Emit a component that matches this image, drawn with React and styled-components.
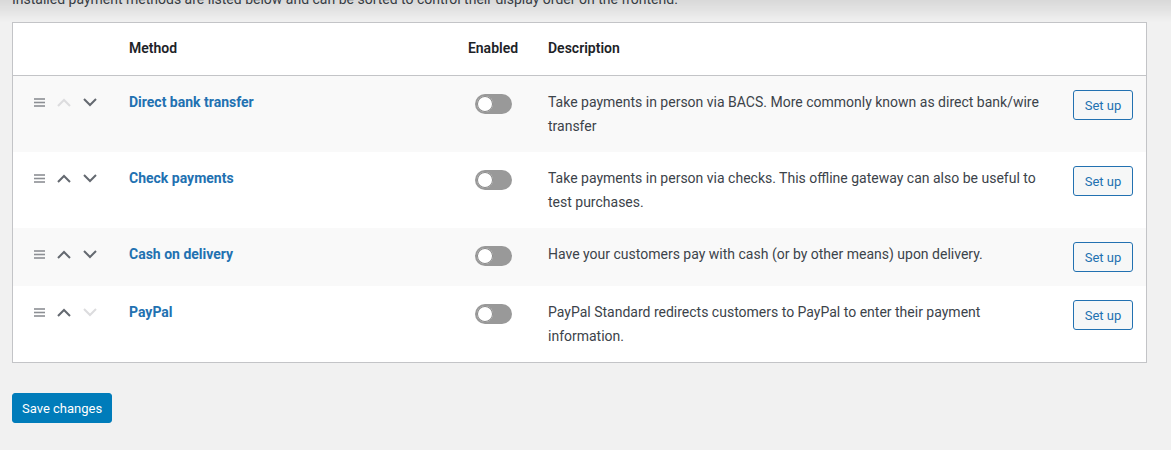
import styled, { createGlobalStyle } from 'styled-components';

const GlobalStyle = createGlobalStyle`
  html, body {
    margin: 0;
    padding: 0;
    background: #f1f1f1;
  }
  body {
    font-family: Roboto, "Noto Sans", "Liberation Sans", sans-serif;
    font-size: 14px;
    color: #3c434a;
    overflow: hidden;
  }
`;

const TopShadow = styled.div`
  position: fixed;
  top: 0;
  left: 0;
  right: 0;
  height: 22px;
  background: linear-gradient(to bottom, rgba(0, 0, 0, 0.1), rgba(0, 0, 0, 0));
  pointer-events: none;
`;

const Page = styled.div`
  padding: 0 24px 0 12px;
  margin-top: -13px;
`;

const Intro = styled.p`
  margin: 0 0 11px;
  line-height: 24px;
  font-size: 14px;
  color: #3c434a;
`;

const Table = styled.div`
  width: 1133px;
  background: #fff;
  border: 1px solid #c3c4c7;
`;

const Row = styled.div`
  display: grid;
  grid-template-columns: 104px 337px 78px 541px 73px;
  align-items: start;
  padding: ${(p) => (p.$head ? '13px 0 15px' : '14px 0')};
  background: ${(p) => (p.$shade ? '#f9f9f9' : '#fff')};
  border-bottom: ${(p) => (p.$head ? '1px solid #c3c4c7' : 'none')};
`;

const HeadCell = styled.div`
  font-weight: 600;
  color: #1d2327;
  line-height: 24px;
  padding-left: ${(p) => p.$pl || 0}px;
  text-align: ${(p) => (p.$center ? 'center' : 'left')};
`;

const SortCell = styled.div`
  display: flex;
  align-items: center;
  gap: 12px;
  height: 24px;
  padding-left: 21px;
`;

const MethodLink = styled.a`
  display: block;
  padding-left: 12px;
  line-height: 24px;
  font-weight: 700;
  color: #2271b1;
  text-decoration: none;
`;

const ToggleCell = styled.div`
  display: flex;
  justify-content: center;
  padding-top: 4px;
`;

const Toggle = styled.span`
  position: relative;
  display: inline-block;
  width: 37px;
  height: 20px;
  border-radius: 10px;
  background: #999;
  &::after {
    content: '';
    position: absolute;
    top: 2px;
    left: 2px;
    width: 16px;
    height: 16px;
    border-radius: 50%;
    background: #fff;
    box-shadow: inset 0 0 0 1px #888;
  }
`;

const Desc = styled.div`
  padding: 0 20px 0 16px;
  line-height: 24px;
  color: #3c434a;
`;

const SetUpButton = styled.button`
  width: 60px;
  height: 30px;
  padding: 0;
  font-family: inherit;
  font-size: 13px;
  color: #2271b1;
  background: #f6f7f7;
  border: 1px solid #2271b1;
  border-radius: 3px;
  cursor: pointer;
`;

const SaveButton = styled.button`
  margin-top: 30px;
  height: 30px;
  padding: 0 9px;
  font-family: inherit;
  font-size: 13px;
  color: #fff;
  background: #007cba;
  border: 1px solid #007cba;
  border-radius: 3px;
  cursor: pointer;
`;

const Burger = () => (
  <svg width="11" height="9" viewBox="0 0 11 9">
    <g stroke="#8c8f94" strokeWidth="1.6">
      <line x1="0" y1="1" x2="11" y2="1" />
      <line x1="0" y1="4.5" x2="11" y2="4.5" />
      <line x1="0" y1="8" x2="11" y2="8" />
    </g>
  </svg>
);

const Chevron = ({ up, off }) => (
  <svg width="14" height="9" viewBox="0 0 14 9">
    <polyline
      points={up ? '1,8 7,2 13,8' : '1,1 7,7 13,1'}
      fill="none"
      stroke={off ? '#dcdcde' : '#646970'}
      strokeWidth="2"
    />
  </svg>
);

const methods = [
  {
    name: 'Direct bank transfer',
    desc: 'Take payments in person via BACS. More commonly known as direct bank/wire transfer',
  },
  {
    name: 'Check payments',
    desc: 'Take payments in person via checks. This offline gateway can also be useful to test purchases.',
  },
  {
    name: 'Cash on delivery',
    desc: 'Have your customers pay with cash (or by other means) upon delivery.',
  },
  {
    name: 'PayPal',
    desc: 'PayPal Standard redirects customers to PayPal to enter their payment information.',
  },
];

export default function App() {
  return (
    <>
      <GlobalStyle />
      <Page>
        <Intro>
          Installed payment methods are listed below and can be sorted to control their display order on the frontend.
        </Intro>
        <Table>
          <Row $head>
            <div />
            <HeadCell $pl={12}>Method</HeadCell>
            <HeadCell $center>Enabled</HeadCell>
            <HeadCell $pl={16}>Description</HeadCell>
            <div />
          </Row>
          {methods.map((m, i) => (
            <Row key={m.name} $shade={i % 2 === 0}>
              <SortCell>
                <Burger />
                <Chevron up off={i === 0} />
                <Chevron off={i === methods.length - 1} />
              </SortCell>
              <MethodLink href="#">{m.name}</MethodLink>
              <ToggleCell>
                <Toggle />
              </ToggleCell>
              <Desc>{m.desc}</Desc>
              <div>
                <SetUpButton>Set up</SetUpButton>
              </div>
            </Row>
          ))}
        </Table>
        <SaveButton>Save changes</SaveButton>
      </Page>
      <TopShadow />
    </>
  );
}
